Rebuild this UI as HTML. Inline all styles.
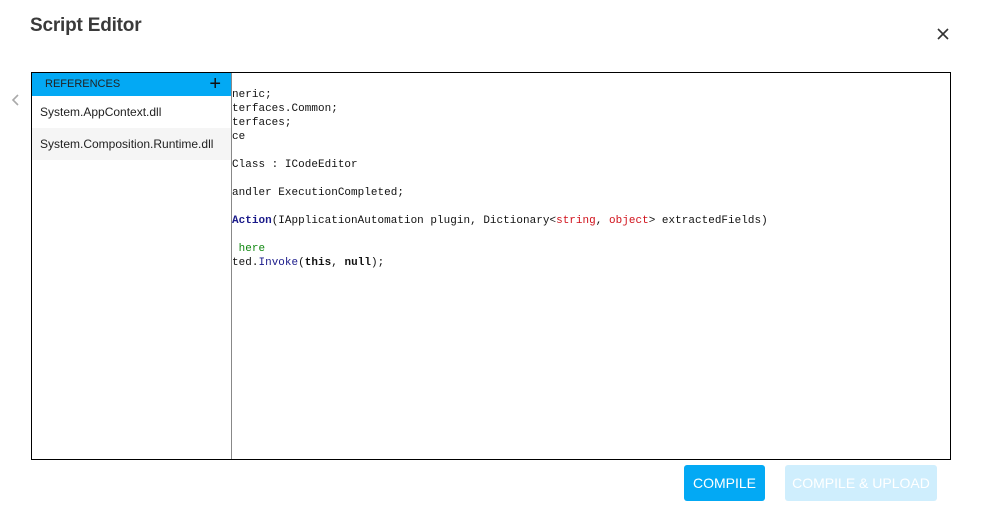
<!DOCTYPE html>
<html><head><style>
body{margin:0;width:997px;height:523px;background:#fff;font-family:"Liberation Sans",sans-serif;position:relative;overflow:hidden}
.t{position:absolute;left:30px;top:15px;font-size:19px;color:#3a3a3a;font-weight:bold;letter-spacing:-0.2px}
.x{position:absolute;left:935px;top:26px}
.chev{position:absolute;left:11px;top:93px}
.box{position:absolute;left:31px;top:72px;width:918px;height:386px;border:1px solid #000}
.lp{position:absolute;left:0;top:0;width:199px;height:386px;border-right:1px solid #888}
.hd{height:23px;background:#03a9f4;color:#222;font-size:11px;line-height:23px;padding-left:13px;position:relative}
.hd span{position:absolute;right:10px;top:-1px;font-size:20px;color:#111;line-height:24px}
.it{height:32px;line-height:32px;font-size:12px;color:#222;padding-left:8px}
.code{position:absolute;left:200px;top:15px;font-family:"Liberation Mono",monospace;font-size:10.95px;letter-spacing:0.05px;line-height:14px;color:#111;white-space:pre}
.b{color:#1a1a8a}.k{font-weight:bold}.r{color:#d0101a}.g{color:#118811}
.btn{position:absolute;top:465px;height:36px;line-height:37px;color:#fff;font-size:14px;text-align:center;border-radius:3px}
</style></head><body>
<div class="t">Script Editor</div>
<svg class="x" width="16" height="16" viewBox="0 0 16 16"><path d="M3 3L13 13M13 3L3 13" stroke="#333" stroke-width="1.6"/></svg>
<svg class="chev" width="10" height="14" viewBox="0 0 10 14"><path d="M7 2L2 7L7 12" stroke="#aaa" stroke-width="1.6" fill="none"/></svg>
<div class="box">
<div class="lp">
<div class="hd">REFERENCES<span>+</span></div>
<div class="it">System.AppContext.dll</div>
<div class="it" style="background:#f5f5f5">System.Composition.Runtime.dll</div>
</div>
<div class="code">neric;
terfaces.Common;
terfaces;
ce

Class : ICodeEditor

andler ExecutionCompleted;

<span class="b k">Action</span>(IApplicationAutomation plugin, Dictionary&lt;<span class="r">string</span>, <span class="r">object</span>&gt; extractedFields)

<span class="g"> here</span>
ted.<span class="b">Invoke</span>(<span class="k">this</span>, <span class="k">null</span>);</div>
</div>
<div class="btn" style="left:684px;width:81px;background:#03a9f4">COMPILE</div>
<div class="btn" style="left:785px;width:152px;background:#cfeefd">COMPILE &amp; UPLOAD</div>
</body></html>
